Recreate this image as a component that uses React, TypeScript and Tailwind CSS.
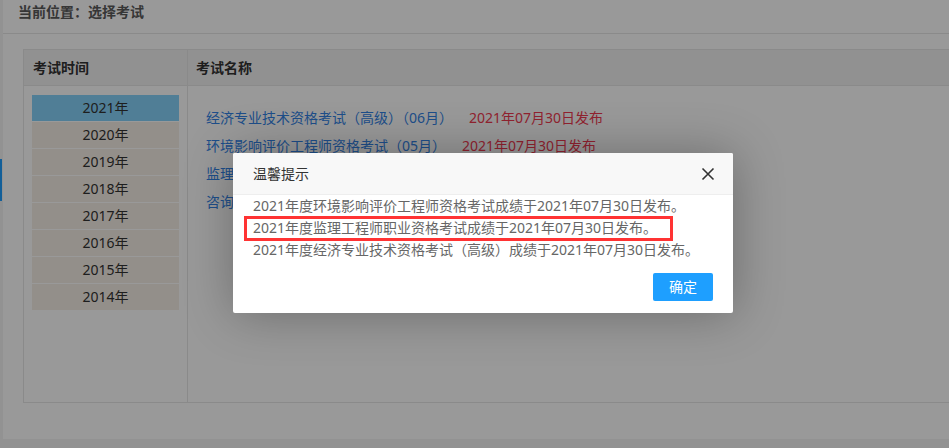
const FONT = { fontFamily: '"Noto Sans", "Noto Sans CJK SC", sans-serif' };

const YEARS = ['2021年', '2020年', '2019年', '2018年', '2017年', '2016年', '2015年', '2014年'];

const EXAMS = [
  { name: '经济专业技术资格考试（高级）（06月）', date: '2021年07月30日发布' },
  { name: '环境影响评价工程师资格考试（05月）', date: '2021年07月30日发布' },
  { name: '监理工程师职业资格考试（05月）', date: '2021年07月30日发布' },
  { name: '咨询工程师（投资）职业资格考试（04月）', date: '2021年07月30日发布' },
];

const NOTICES = [
  '2021年度环境影响评价工程师资格考试成绩于2021年07月30日发布。',
  '2021年度监理工程师职业资格考试成绩于2021年07月30日发布。',
  '2021年度经济专业技术资格考试（高级）成绩于2021年07月30日发布。',
];

export default function App() {
  return (
    <div className="relative w-[949px] h-[448px] overflow-hidden bg-[#f3f3f3] text-sm" style={FONT}>
      {/* left side tab marker */}
      <div className="absolute left-0 top-[159px] w-[2px] h-[42px] bg-[#1e9fff]" />

      <div className="ml-[3px] h-[439px] bg-white">
        <div className="h-[34px] pl-[15px] pt-[1px] leading-[22px] font-bold text-[#5a5a5a] border-b border-[#e6e6e6]">
          当前位置：选择考试
        </div>

        <div className="ml-5 mt-[15px] w-[1000px] border border-[#e6e6e6]">
          <div className="flex h-[36px] bg-[#f2f2f2] border-b border-[#e6e6e6] font-bold text-[#333]">
            <div className="w-[164px] pl-[9px] flex items-center border-r border-[#e6e6e6]">考试时间</div>
            <div className="flex-1 pl-2 flex items-center">考试名称</div>
          </div>
          <div className="flex h-[316px]">
            <div className="w-[164px] px-2 pt-[9px] border-r border-[#e6e6e6] flex flex-col gap-px">
              {YEARS.map((y, i) => (
                <div
                  key={y}
                  className={`h-[26px] leading-[26px] text-center text-[#333] ${i === 0 ? 'bg-[#86d3fb]' : 'bg-[#f6efe6]'}`}
                >
                  {y}
                </div>
              ))}
            </div>
            <div className="flex-1 pl-[18px] pt-[18px]">
              {EXAMS.map((e) => (
                <div key={e.name} className="leading-[28px] whitespace-nowrap">
                  <span className="text-[#3283e6]">{e.name}</span>
                  <span className="ml-[16px] text-[#f23a50]">{e.date}</span>
                </div>
              ))}
            </div>
          </div>
        </div>
      </div>

      {/* shade */}
      <div className="absolute inset-0 bg-black/40" />

      {/* dialog */}
      <div className="absolute left-[233px] top-[153px] w-[500px] bg-white rounded-[2px] shadow-[1px_1px_50px_rgba(0,0,0,0.3)]">
        <div className="h-[42px] flex items-center justify-between pl-5 pr-[18px] bg-[#f8f8f8] border-b border-[#eee] rounded-t-[2px] text-[#333]">
          <span>温馨提示</span>
          <svg width="14" height="14" viewBox="0 0 14 14" fill="none" stroke="#333" strokeWidth="1.6">
            <path d="M1.5 1.5 12.5 12.5M12.5 1.5 1.5 12.5" />
          </svg>
        </div>
        <div className="px-5 pb-[7px] leading-[22px] text-[#666] whitespace-nowrap">
          {NOTICES.map((n, i) => (
            <div key={n} className="relative">
              {n}
              {i === 1 && (
                <div className="absolute -left-[9px] -top-px w-[429px] h-[25px] border-[3px] border-[#f33]" />
              )}
            </div>
          ))}
        </div>
        <div className="flex justify-end pt-[5px] pr-5 pb-3">
          <button className="w-[60px] h-[28px] rounded-[2px] bg-[#1e9fff] text-white">确定</button>
        </div>
      </div>
    </div>
  );
}
